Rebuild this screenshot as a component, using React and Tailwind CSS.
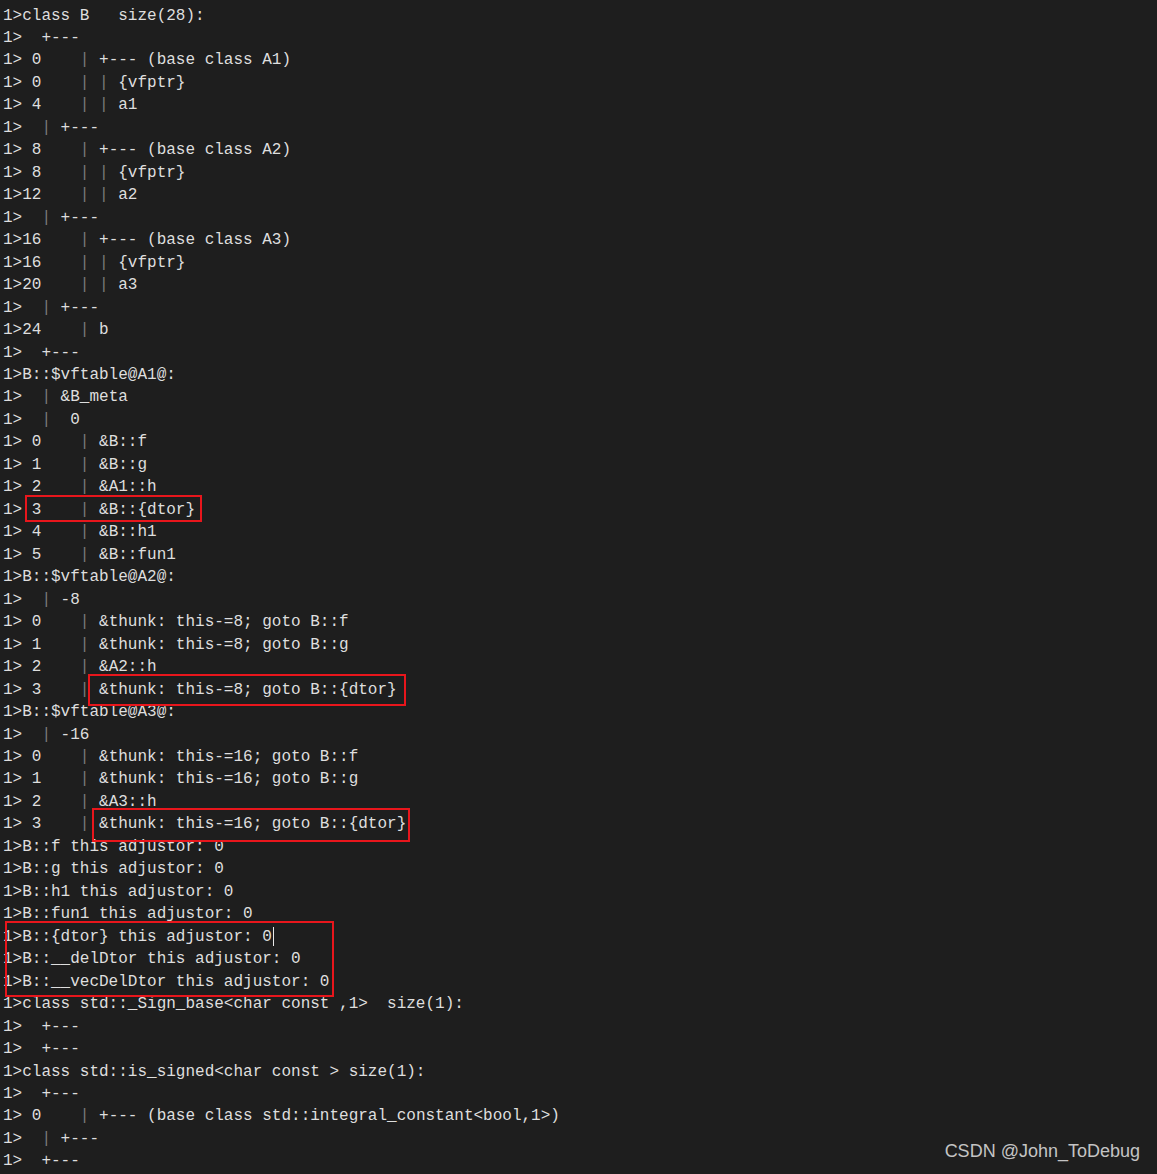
import React from "react";

const lines = [
  "1>class B   size(28):",
  "1>  +---",
  "1> 0    | +--- (base class A1)",
  "1> 0    | | {vfptr}",
  "1> 4    | | a1",
  "1>  | +---",
  "1> 8    | +--- (base class A2)",
  "1> 8    | | {vfptr}",
  "1>12    | | a2",
  "1>  | +---",
  "1>16    | +--- (base class A3)",
  "1>16    | | {vfptr}",
  "1>20    | | a3",
  "1>  | +---",
  "1>24    | b",
  "1>  +---",
  "1>B::$vftable@A1@:",
  "1>  | &B_meta",
  "1>  |  0",
  "1> 0    | &B::f",
  "1> 1    | &B::g",
  "1> 2    | &A1::h",
  "1> 3    | &B::{dtor}",
  "1> 4    | &B::h1",
  "1> 5    | &B::fun1",
  "1>B::$vftable@A2@:",
  "1>  | -8",
  "1> 0    | &thunk: this-=8; goto B::f",
  "1> 1    | &thunk: this-=8; goto B::g",
  "1> 2    | &A2::h",
  "1> 3    | &thunk: this-=8; goto B::{dtor}",
  "1>B::$vftable@A3@:",
  "1>  | -16",
  "1> 0    | &thunk: this-=16; goto B::f",
  "1> 1    | &thunk: this-=16; goto B::g",
  "1> 2    | &A3::h",
  "1> 3    | &thunk: this-=16; goto B::{dtor}",
  "1>B::f this adjustor: 0",
  "1>B::g this adjustor: 0",
  "1>B::h1 this adjustor: 0",
  "1>B::fun1 this adjustor: 0",
  "1>B::{dtor} this adjustor: 0",
  "1>B::__delDtor this adjustor: 0",
  "1>B::__vecDelDtor this adjustor: 0",
  "1>class std::_Sign_base<char const ,1>  size(1):",
  "1>  +---",
  "1>  +---",
  "1>class std::is_signed<char const > size(1):",
  "1>  +---",
  "1> 0    | +--- (base class std::integral_constant<bool,1>)",
  "1>  | +---",
  "1>  +---",
];

function Line({ text, cursor }) {
  const parts = text.split("|");
  return (
    <div className="h-[22.48px] leading-[22.48px] whitespace-pre">
      {parts.map((p, i) => (
        <React.Fragment key={i}>
          {i > 0 && <span className="text-[#7a7a7a]">|</span>}
          {p}
        </React.Fragment>
      ))}
      {cursor && (
        <span className="inline-block w-px h-[19px] bg-[#e8e8e8] align-middle ml-[1px]"></span>
      )}
    </div>
  );
}

export default function App() {
  return (
    <div className="relative w-full h-[1174px] bg-[#1e1e1e] overflow-hidden">
      <div
        className="pt-[4.5px] pl-[3px] text-[16px] text-[#dedede]"
        style={{ fontFamily: '"Liberation Mono", "DejaVu Sans Mono", monospace' }}
      >
        {lines.map((l, i) => (
          <Line key={i} text={l} cursor={i === 41} />
        ))}
      </div>

      <div className="absolute left-[25px] top-[495px] w-[177px] h-[27px] border-2 border-[#e8161c]"></div>
      <div className="absolute left-[88px] top-[674px] w-[318px] h-[32px] border-2 border-[#e8161c]"></div>
      <div className="absolute left-[92px] top-[808px] w-[318px] h-[34px] border-2 border-[#e8161c]"></div>
      <div className="absolute left-[5px] top-[921px] w-[329px] h-[76px] border-2 border-[#e8161c]"></div>

      <div
        className="absolute right-[17px] bottom-[9px] text-[18px] text-[#c4c4c4]"
        style={{ fontFamily: '"Liberation Sans", Arial, sans-serif' }}
      >
        CSDN @John_ToDebug
      </div>
    </div>
  );
}
